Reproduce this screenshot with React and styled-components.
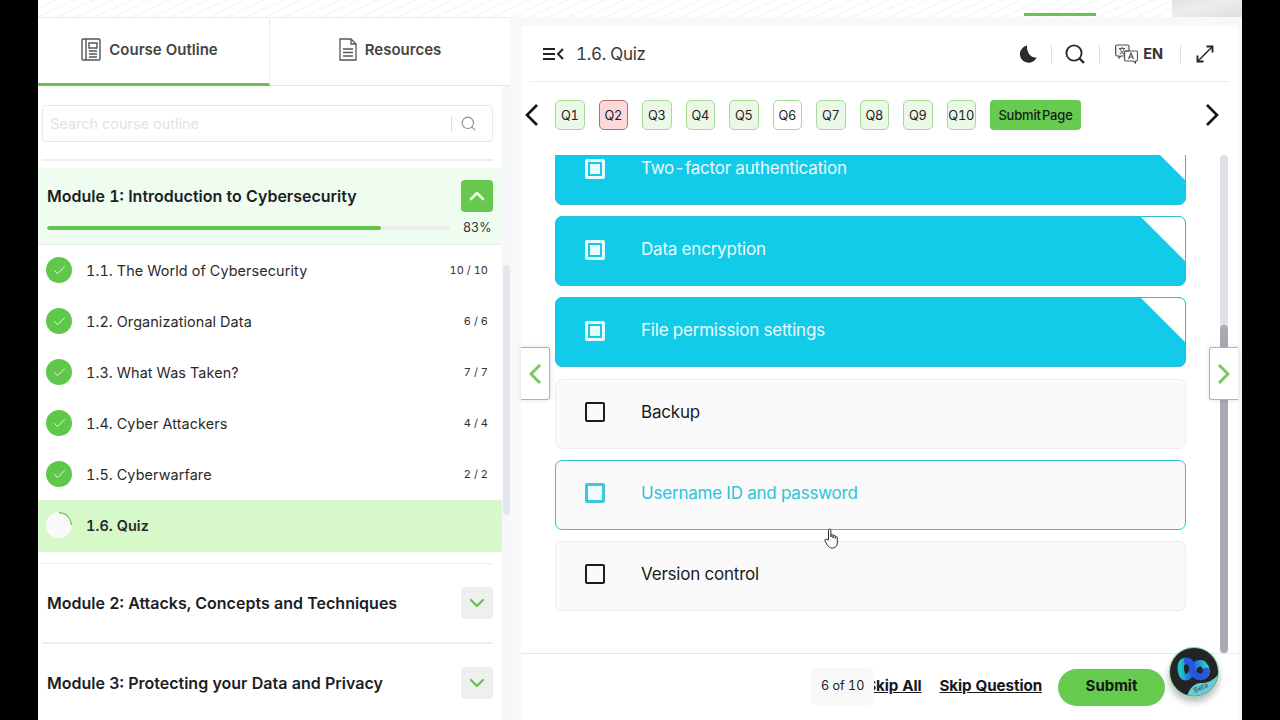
import React from "react";
import styled, { createGlobalStyle } from "styled-components";
import { Search, Check, ChevronUp, ChevronDown } from "lucide-react";

const Global = createGlobalStyle`
  html, body { margin: 0; padding: 0; background: #000; }
  * { box-sizing: border-box; }
  body { font-family: Inter, "Liberation Sans", sans-serif; overflow: hidden; font-variant-numeric: tabular-nums; }
`;

const Page = styled.div`
  width: 1280px; height: 720px; padding: 0 38px; background: #000; overflow: hidden; position: relative;
`;
const Frame = styled.div`
  width: 1204px; height: 720px; display: flex; flex-direction: column; background: #f7f8f9;
`;
const Strip = styled.div`
  height: 17px; flex: none; display: flex; align-items: flex-end;
  background: repeating-linear-gradient(155deg, #fff 0 7px, #f4f4f4 7px 8px);
`;
const Progress = styled.div`
  width: 72px; height: 3px; margin-left: 986px; margin-bottom: 1px; background: #6cc24f;
`;
const Corner = styled.div`
  width: 70px; height: 17px; margin-left: auto;
  background: linear-gradient(165deg, #e2e2e2, #ededed 40%, #dedede);
`;
const Body = styled.div`
  flex: 1; min-height: 0; display: flex;
`;
const Sidebar = styled.aside`
  width: 472px; flex: none; background: #fff; display: flex; flex-direction: column;
`;
const Tabs = styled.div`
  height: 69px; flex: none; display: flex; border-top: 1px solid #ededed; border-bottom: 1px solid #e6e6e6;
`;
const Tab = styled.div`
  width: ${p => p.$w}px; display: flex; align-items: center; justify-content: center; gap: 8px;
  font-size: 15px; font-weight: 600; color: #444;
  margin-bottom: -1px;
  padding: 0 ${p => (p.$on ? 8 : 0)}px ${p => (p.$on ? 2 : 4)}px 0;
  border-bottom: ${p => (p.$on ? "3px solid #6cc24f" : "1px solid #e6e6e6")};
  border-right: ${p => (p.$on ? "1px solid #ececec" : "none")};
  svg { flex: none; }
`;
const SideBody = styled.div`
  flex: 1; min-height: 0; display: flex;
`;
const Outline = styled.div`
  width: 464px; flex: none; overflow: hidden; padding-top: 19px;
`;
const SideTrack = styled.div`
  width: 8px; flex: none; background: #f5f7f8; padding-top: 179px;
`;
const SideThumb = styled.div`
  height: 250px; margin-left: 1px; background: #e3e6ea; border-radius: 4px;
`;
const SearchBox = styled.div`
  width: 451px; height: 37px; margin-left: 4px; display: flex; align-items: center;
  border: 1px solid #e9e9e9; border-radius: 4px; padding-left: 7px;
  font-size: 14.5px; color: #e3e3e3;
`;
const SearchText = styled.span`
  flex: 1;
`;
const SearchIcon = styled.span`
  width: 41px; height: 16px; border-left: 1px solid #dcdcdc; display: flex; align-items: center;
  justify-content: flex-start; padding-left: 8px; color: #8f8f8f;
`;
const Rule = styled.div`
  height: ${p => p.$h || 1}px; width: 451px; margin: ${p => p.$m}; background: #eee;
`;
const ModuleOpen = styled.div`
  height: 77px; background: #effcf0; padding: 12px 9px 0 9px; border-bottom: 1px solid #e9ece9;
`;
const ModuleRow = styled.div`
  display: flex; align-items: center; justify-content: space-between;
`;
const ModuleTitle = styled.div`
  font-size: 16px; font-weight: 600; color: #1d1d24;
`;
const Toggle = styled.div`
  width: 32px; height: 32px; border-radius: 4px; display: flex; align-items: center; justify-content: center;
  background: ${p => (p.$on ? "#66c94d" : "#efefef")};
  color: ${p => (p.$on ? "#f1fbe9" : "#62c64c")};
`;
const BarRow = styled.div`
  display: flex; align-items: center; margin-top: 8px;
`;
const Bar = styled.div`
  width: 403px; height: 4px; margin-top: 1px; border-radius: 2px; background: #eeeeee; overflow: hidden;
`;
const BarFill = styled.div`
  height: 100%; border-radius: 2px; background: #66c24f;
`;
const Pct = styled.div`
  margin-left: 13px; font-size: 12.5px; color: #333;
`;
const Lesson = styled.div`
  height: ${p => (p.$on ? 52 : 51)}px; display: flex; align-items: center;
  padding: 0 14px ${p => (p.$on ? 2 : 1)}px 8px;
  background: ${p => (p.$on ? "#d7f8c8" : "transparent")};
  border-radius: ${p => (p.$on ? "0 0 3px 0" : "0")};
`;
const Done = styled.span`
  width: 26px; height: 26px; border-radius: 50%; background: #5fc84a; color: #eaf9e4;
  display: flex; align-items: center; justify-content: center; flex: none;
`;
const LessonName = styled.span`
  margin-left: 14px; flex: 1; font-size: 14.4px; letter-spacing: .1px;
  font-weight: ${p => (p.$on ? 600 : 400)}; color: #2a2a2a;
`;
const Count = styled.span`
  font-size: 11px; color: #333;
`;
const ModuleClosed = styled.div`
  height: 78px; display: flex; align-items: center; justify-content: space-between; padding: 0 9px ${p => p.$pb}px;
`;
const Main = styled.main`
  width: 717px; flex: none; margin: 9px 0 0 11px; background: #fff; display: flex; flex-direction: column;
  border-radius: 4px 4px 0 0; position: relative; min-height: 0;
`;
const Head = styled.header`
  height: 56px; flex: none; margin: 0 9px; display: flex; align-items: center; border-bottom: 1px solid #eceeee;
  padding: 0 15px 0 13px;
`;
const Title = styled.div`
  margin-left: 12px; font-size: 17px; color: #3a3a3a; letter-spacing: -.3px;
`;
const Tools = styled.div`
  margin-left: auto; display: flex; align-items: center; color: #2b2b2b;
`;
const Sep = styled.span`
  width: 1px; height: 18px; background: #dcdcdc; margin: ${p => p.$m};
`;
const Lang = styled.span`
  font-size: 14.5px; font-weight: 700; margin-left: 5px; color: #333;
`;
const QBar = styled.nav`
  height: 73px; flex: none; display: flex; align-items: center; padding-bottom: 7px; color: #111;
`;
const QNav = styled.span`
  width: 20px; flex: none; display: flex; justify-content: center; margin: ${p => p.$m};
`;
const QList = styled.div`
  margin-left: 14px; display: flex; gap: 14px;
`;
const QBtn = styled.div`
  width: 29.5px; height: 30px; border-radius: 5px; display: flex; align-items: center; justify-content: center;
  font-size: 12.8px; color: #222; letter-spacing: -.2px;
  border: 1px solid ${p => (p.$s === "bad" ? "#b36d72" : "#a5da97")};
  background: ${p => (p.$s === "bad" ? "#fbd9da" : p.$s === "open" ? "#fff" : "#ebf7e7")};
`;
const SubmitPage = styled.div`
  width: 91px; height: 30px; border-radius: 4px; background: #66cc4f; color: #1b1b1b;
  display: flex; align-items: center; justify-content: center; font-size: 13px; letter-spacing: -.2px; word-spacing: -2px; font-weight: 500;
`;
const Scroller = styled.div`
  height: 498px; flex: none; display: flex; overflow: hidden;
`;
const Options = styled.div`
  width: 631px; margin: -20px 0 0 34px; display: flex; flex-direction: column; gap: 11px; flex: none;
`;
const Option = styled.div`
  height: 70px; flex: none; border-radius: 7px; display: flex; align-items: center; position: relative; overflow: hidden;
  padding: 0 0 4px 29px;
  margin-top: ${p => (p.$first ? 1 : 0)}px;
  font-size: 17px; letter-spacing: -.2px;
  background: ${p => (p.$s === "sel" ? "#12cbe9" : "#fafafa")};
  border: 1px solid ${p => (p.$s === "sel" ? "#2fbcd3" : p.$s === "hover" ? "#30c4da" : "#ececec")};
  color: ${p => (p.$s === "sel" ? "#eafaff" : p.$s === "hover" ? "#2cc3da" : "#1a1a1a")};
  ${p => p.$s === "sel" && `
    &::after {
      content: ""; position: absolute; right: 0; top: 0; width: 44px; height: 44px;
      background: #fff; clip-path: polygon(0 0, 100% 0, 100% 100%);
    }
  `}
`;
const Box = styled.span`
  width: 20px; height: 20px; flex: none; border-radius: 2px; margin-right: 36px; display: flex; align-items: center; justify-content: center;
  margin-top: ${p => (p.$s === "sel" ? 2 : 0)}px;
  border-style: solid;
  border-color: ${p => (p.$s === "sel" ? "#e6fbff" : p.$s === "hover" ? "#3cc7dc" : "#1c1c1c")};
  border-width: ${p => (p.$s === "idle" ? 2 : 3)}px;
  background: ${p => (p.$s === "hover" ? "#f0fbfd" : "transparent")};
`;
const BoxDot = styled.span`
  width: 10px; height: 10px; background: #e9fcff;
`;
const VTrack = styled.div`
  width: 8px; margin-left: 34px; flex: none; background: #e1e2e7; border-radius: 4px; padding-top: 170px; display: flex;
`;
const VThumb = styled.div`
  width: 100%; background: #a9aab1; border-radius: 4px;
`;
const Foot = styled.footer`
  flex: 1; display: flex; align-items: center; justify-content: flex-end; border-top: 1px solid #e9e9e9;
  padding: 0 73px 1px 0;
`;
const CountPill = styled.div`
  width: 63px; height: 37px; background: #f8f8f8; border-radius: 5px; display: flex; align-items: center; justify-content: center;
  font-size: 12.6px; color: #222; position: relative; z-index: 1; margin-right: -8px; padding-bottom: 2px;
`;
const Skip = styled.a`
  font-size: 15.2px; font-weight: 700; color: #17171d; text-decoration: underline; margin: 0 ${p => p.$r}px 3px 0; letter-spacing: -.1px; white-space: nowrap;
`;
const Submit = styled.div`
  width: 107px; height: 37px; border-radius: 19px; background: #66cc4f; color: #161616; font-size: 15px; font-weight: 700;
  display: flex; align-items: center; justify-content: center; padding-bottom: 3px; margin-top: 1px;
`;
const Pager = styled.div`
  position: absolute; top: 321px; width: 29px; height: 53px; background: #fff; display: flex; align-items: center; justify-content: center;
  color: #78c85f; border: 1px solid #8fcf7c; box-shadow: 0 0 5px rgba(0,0,0,.12);
  ${p => (p.$side === "l"
    ? "left: 0; border-left: none; border-radius: 0 3px 3px 0;"
    : "right: 0; border-right: none; border-radius: 3px 0 0 3px;")}
`;
const Avatar = styled.div`
  position: absolute; left: 1169px; top: 647px; width: 50px; height: 50px; border-radius: 50%;
  box-shadow: 0 5px 7px rgba(0,0,0,.28);
`;
const Pointer = styled.div`
  position: absolute; left: 824px; top: 528px; width: 15px; height: 21px;
`;

const lessons = [
  ["1.1. The World of Cybersecurity", "10 / 10"],
  ["1.2. Organizational Data", "6 / 6"],
  ["1.3. What Was Taken?", "7 / 7"],
  ["1.4. Cyber Attackers", "4 / 4"],
  ["1.5. Cyberwarfare", "2 / 2"],
];
const qs = ["done", "bad", "done", "done", "done", "open", "done", "done", "done", "done"];
const opts = [
  ["Two-factor authentication", "sel"],
  ["Data encryption", "sel"],
  ["File permission settings", "sel"],
  ["Backup", "idle", true],
  ["Username ID and password", "hover"],
  ["Version control", "idle"],
];

const Chevron = ({ dir, w, h, sw }) => (
  <svg width={w} height={h} viewBox={`0 0 ${w} ${h}`} fill="none" stroke="currentColor" strokeWidth={sw}>
    <path d={dir === "l" ? `M${w - 1} 1L2 ${h / 2}L${w - 1} ${h - 1}` : `M1 1L${w - 2} ${h / 2}L1 ${h - 1}`} />
  </svg>
);
const BookIcon = () => (
  <svg width="20" height="23" viewBox="0 0 20 23" fill="none" stroke="#555" strokeWidth="1.4">
    <rect x="1" y="1" width="18" height="21" rx="1" />
    <path d="M5 1v21M8 5h8v5H8zM8 13h8M8 16h8M8 19h8" />
  </svg>
);
const DocIcon = () => (
  <svg width="18" height="23" viewBox="0 0 18 23" fill="none" stroke="#555" strokeWidth="1.3">
    <path d="M1 1h11l5 5v16H1zM12 1v5h5M4 11h10M4 14.5h10M4 18h10" />
  </svg>
);
const MenuIcon = () => (
  <svg width="21" height="14" viewBox="0 0 21 14" fill="none" stroke="#222" strokeWidth="2">
    <path d="M0 2h12M0 7h12M0 12h12M20 2l-5 5 5 5" />
  </svg>
);
const Moon = () => (
  <svg width="18" height="18" viewBox="0 0 18 18" fill="#2b2b2b">
    <path d="M8 .5A8.7 8.7 0 1 0 17.6 12.5C12.5 13.5 7.5 8 8 .5z" />
  </svg>
);
const Lens = () => (
  <svg width="20" height="20" viewBox="0 0 20 20" fill="none" stroke="#2b2b2b" strokeWidth="1.9">
    <circle cx="9" cy="9" r="7.6" />
    <path d="M14.5 14.5L19 19" strokeWidth="2.4" />
  </svg>
);
const Translate = () => (
  <svg width="23" height="20" viewBox="0 0 23 20" fill="none" stroke="#555" strokeWidth="1.2">
    <path d="M2 1h10.5a1.5 1.5 0 0 1 1.5 1.5V7H11a1.5 1.5 0 0 0-1.5 1.5V12H6l-2 2v-2H2A1.5 1.5 0 0 1 .6 10.5v-8A1.5 1.5 0 0 1 2 1z" fill="#f2f2f2" />
    <path d="M11 7h10a1.5 1.5 0 0 1 1.5 1.5v7A1.5 1.5 0 0 1 21 17h-.5v2l-2.5-2H11a1.5 1.5 0 0 1-1.5-1.5v-7A1.5 1.5 0 0 1 11 7z" />
    <path d="M13.5 15l2.5-6 2.5 6M14.4 13h3.2" />
    <path d="M4 4.5h6M7 3v1.5M5 5c.5 2 2 4 4 5M9 5c-.5 2-2 4-4 5" strokeWidth="1" />
  </svg>
);
const Expand = () => (
  <svg width="18" height="18" viewBox="0 0 18 18" fill="none" stroke="#222" strokeWidth="1.5">
    <path d="M2 16L16 2" />
    <path d="M10.5 1.5h6v6" strokeWidth="1.9" />
    <path d="M1.5 10.5v6h6" strokeWidth="1.9" />
  </svg>
);
const Spinner = () => (
  <svg width="26" height="26" viewBox="0 0 26 26" fill="none">
    <circle cx="13" cy="13" r="13" fill="#fafafa" />
    <path d="M13 .7A12.3 12.3 0 0 1 25.3 13" stroke="#5fc84a" strokeWidth="1.2" />
  </svg>
);
const Logo = () => (
  <svg width="50" height="50" viewBox="0 0 50 50">
    <defs>
      <clipPath id="lc"><circle cx="25" cy="25" r="24" /></clipPath>
      <linearGradient id="lg" x1="0" x2="1" y1="0" y2="0">
        <stop offset="0" stopColor="#1fc5c9" />
        <stop offset=".45" stopColor="#2458e0" />
        <stop offset="1" stopColor="#2bd0c0" />
      </linearGradient>
    </defs>
    <circle cx="25" cy="25" r="25" fill="#7ed08a" />
    <g clipPath="url(#lc)">
      <rect width="50" height="50" fill="#242426" />
      <path d="M18 50C20 41 26 36 32 36S42 35 50 27V50z" fill="#6bcbd6" />
      <path d="M17 14c-5 0-6 5-5 10s3 7 6 6c5-1 6-9 8-11 2-3 7-4 9-1 3 3 3 8 1 10" fill="none" stroke="url(#lg)" strokeWidth="6.5" strokeLinecap="round" />
      <path d="M18 14c4 0 5 5 6 9 1 5 4 7 8 7s5-4 5-6" fill="none" stroke="#2458e0" strokeWidth="6.5" strokeLinecap="round" />
      <text x="26" y="46" fontSize="7" fontFamily="Inter, sans-serif" fill="#22505a" transform="rotate(-25 26 46)">Beta</text>
    </g>
  </svg>
);
const Hand = () => (
  <svg width="15" height="21" viewBox="0 0 15 21" fill="#fff" stroke="#333" strokeWidth="1">
    <path d="M4.5 12V2.2a1.2 1.2 0 0 1 2.4 0V9V7.5a1.1 1.1 0 0 1 2.2 0V10V8.3a1.1 1.1 0 0 1 2.2 0V10.5V9.5a1 1 0 0 1 2 0V15c0 3-2 5-5 5-2.5 0-3.7-1-5-3L1 13c-.8-1.4 1-2.4 2-1.4z" />
  </svg>
);

export default function App() {
  return (
    <Page>
      <Global />
      <Frame>
        <Strip>
          <Progress />
          <Corner />
        </Strip>
        <Body>
          <Sidebar>
            <Tabs>
              <Tab $w={232} $on><BookIcon />Course Outline</Tab>
              <Tab $w={240}><DocIcon />Resources</Tab>
            </Tabs>
            <SideBody>
              <Outline>
                <SearchBox>
                  <SearchText>Search course outline</SearchText>
                  <SearchIcon><Search size={17} strokeWidth={1.5} /></SearchIcon>
                </SearchBox>
                <Rule $h={2} $m="17px 0 7px 4px" />
                <ModuleOpen>
                  <ModuleRow>
                    <ModuleTitle>Module 1: Introduction to Cybersecurity</ModuleTitle>
                    <Toggle $on><ChevronUp size={24} strokeWidth={2.6} /></Toggle>
                  </ModuleRow>
                  <BarRow>
                    <Bar><BarFill style={{ width: "83%" }} /></Bar>
                    <Pct>83%</Pct>
                  </BarRow>
                </ModuleOpen>
                {lessons.map(([n, c]) => (
                  <Lesson key={n}>
                    <Done><Check size={15} strokeWidth={1.5} /></Done>
                    <LessonName>{n}</LessonName>
                    <Count>{c}</Count>
                  </Lesson>
                ))}
                <Lesson $on>
                  <Spinner />
                  <LessonName $on>1.6. Quiz</LessonName>
                </Lesson>
                <Rule $m="11px 0 0 4px" />
                <ModuleClosed $pb={0}>
                  <ModuleTitle>Module 2: Attacks, Concepts and Techniques</ModuleTitle>
                  <Toggle><ChevronDown size={24} strokeWidth={2.4} /></Toggle>
                </ModuleClosed>
                <Rule $h={2} $m="0 0 0 4px" />
                <ModuleClosed $pb={1}>
                  <ModuleTitle>Module 3: Protecting your Data and Privacy</ModuleTitle>
                  <Toggle><ChevronDown size={24} strokeWidth={2.4} /></Toggle>
                </ModuleClosed>
              </Outline>
              <SideTrack><SideThumb /></SideTrack>
            </SideBody>
          </Sidebar>
          <Main>
            <Head>
              <MenuIcon />
              <Title>1.6. Quiz</Title>
              <Tools>
                <Moon />
                <Sep $m="0 13px 0 14px" />
                <Lens />
                <Sep $m="0 15px 0 14px" />
                <Translate />
                <Lang>EN</Lang>
                <Sep $m="0 15px 0 17px" />
                <Expand />
              </Tools>
            </Head>
            <QBar>
              <QNav><Chevron dir="l" w={13} h={22} sw={2.6} /></QNav>
              <QList>
                {qs.map((s, i) => <QBtn key={i} $s={s}>Q{i + 1}</QBtn>)}
                <SubmitPage>Submit Page</SubmitPage>
              </QList>
              <QNav $m="0 16px 0 auto"><Chevron dir="r" w={13} h={22} sw={2.6} /></QNav>
            </QBar>
            <Scroller>
              <Options>
                {opts.map(([t, s, first]) => (
                  <Option key={t} $s={s} $first={first}>
                    <Box $s={s}>{s === "sel" && <BoxDot />}</Box>
                    {t}
                  </Option>
                ))}
              </Options>
              <VTrack><VThumb /></VTrack>
            </Scroller>
            <Foot>
              <CountPill>6 of 10</CountPill>
              <Skip $r={18}>Skip All</Skip>
              <Skip $r={16}>Skip Question</Skip>
              <Submit>Submit</Submit>
            </Foot>
            <Pager $side="l"><Chevron dir="l" w={12} h={20} sw={3} /></Pager>
            <Pager $side="r"><Chevron dir="r" w={12} h={20} sw={3} /></Pager>
          </Main>
        </Body>
      </Frame>
      <Pointer><Hand /></Pointer>
      <Avatar><Logo /></Avatar>
    </Page>
  );
}
